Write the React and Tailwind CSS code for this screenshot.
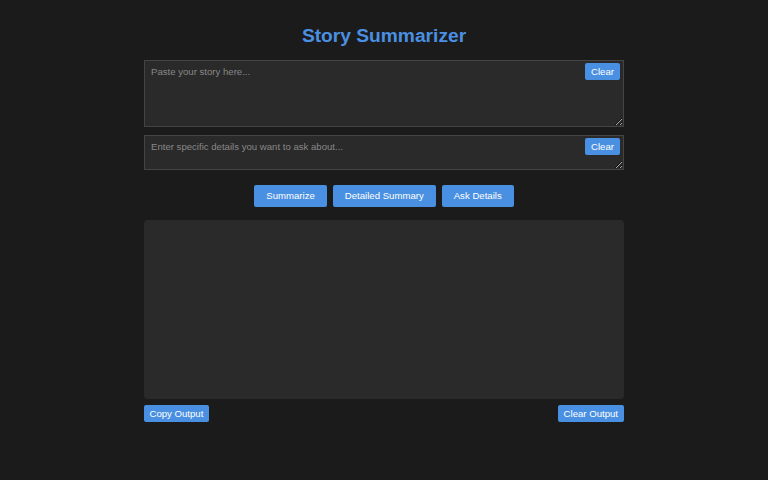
import React, { useState } from 'react';

const btn = 'bg-[#4a90e2] text-white rounded-[2px] leading-none cursor-pointer';

export default function App() {
  const [story, setStory] = useState('');
  const [details, setDetails] = useState('');
  const [output, setOutput] = useState('');

  return (
    <div className="min-h-screen bg-[#1b1b1b] font-['Liberation_Sans',Arial,sans-serif]">
      <div className="w-[480px] mx-auto pt-[25px]">
        <h1 className="text-[19.2px] leading-[22px] font-bold text-center text-[#4a90e2]">
          Story Summarizer
        </h1>

        {/* story input */}
        <div className="relative mt-[13px]">
          <textarea
            value={story}
            onChange={(e) => setStory(e.target.value)}
            placeholder="Paste your story here..."
            className="block w-full h-[67px] border border-[#444] bg-[#2a2a2a] text-[#ddd] px-[6px] py-[5px] text-[9.6px] leading-[12px] outline-none placeholder:text-[#888]"
          />
          <button
            onClick={() => setStory('')}
            className={`${btn} absolute top-[3px] right-[4px] h-[17px] px-[6px] text-[9.6px]`}
          >
            Clear
          </button>
        </div>

        {/* details input */}
        <div className="relative mt-[8px]">
          <textarea
            value={details}
            onChange={(e) => setDetails(e.target.value)}
            placeholder="Enter specific details you want to ask about..."
            className="block w-full h-[35px] border border-[#444] bg-[#2a2a2a] text-[#ddd] px-[6px] py-[5px] text-[9.6px] leading-[12px] outline-none placeholder:text-[#888]"
          />
          <button
            onClick={() => setDetails('')}
            className={`${btn} absolute top-[3px] right-[4px] h-[17px] px-[6px] text-[9.6px]`}
          >
            Clear
          </button>
        </div>

        {/* actions */}
        <div className="mt-[15px] flex justify-center gap-[6px]">
          <button className={`${btn} h-[22px] px-[12px] text-[9.6px]`}>Summarize</button>
          <button className={`${btn} h-[22px] px-[12px] text-[9.6px]`}>Detailed Summary</button>
          <button className={`${btn} h-[22px] px-[12px] text-[9.6px]`}>Ask Details</button>
        </div>

        {/* output */}
        <div className="mt-[13px] h-[179px] rounded-[4px] bg-[#2a2a2a] p-[8px] text-[9.6px] text-[#ddd] overflow-auto">
          {output}
        </div>

        <div className="mt-[6px] flex justify-between">
          <button
            onClick={() => navigator.clipboard?.writeText(output)}
            className={`${btn} h-[17px] px-[5.5px] text-[9.6px]`}
          >
            Copy Output
          </button>
          <button onClick={() => setOutput('')} className={`${btn} h-[17px] px-[6px] text-[9.6px]`}>
            Clear Output
          </button>
        </div>
      </div>
    </div>
  );
}
